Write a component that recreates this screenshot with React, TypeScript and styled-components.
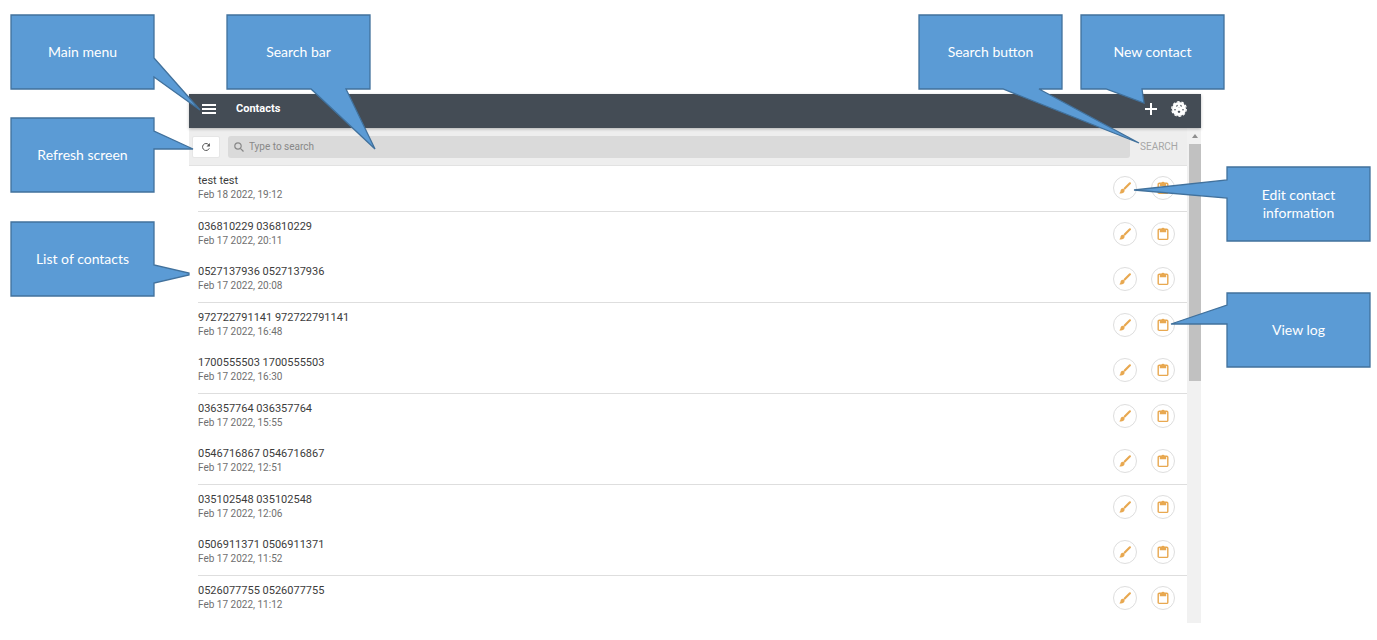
import React from "react";
import styled, { createGlobalStyle } from "styled-components";

const GlobalStyle = createGlobalStyle`
  * { box-sizing: border-box; }
  body { margin: 0; background: #fff; font-family: Roboto, "Liberation Sans", sans-serif; }
`;

const Page = styled.main`
  position: relative;
  min-height: 100vh;
  padding: 94px 176px 17px 189px;
  overflow: hidden;
`;

const AppWindow = styled.section`
  display: flex;
  flex-direction: column;
`;

const Header = styled.header`
  position: relative;
  display: flex;
  align-items: center;
  height: 34px;
  padding: 0 14px 4px 13px;
  background: #444c55;
  color: #fff;
  box-shadow: 0 1px 3px rgba(0, 0, 0, 0.25);
`;

const HeaderButton = styled.button`
  display: flex;
  padding: 0;
  border: 0;
  background: none;
  color: inherit;
  svg { display: block; }
`;

const Title = styled.h1`
  flex: 1;
  margin: 0 0 0 20px;
  font-size: 11px;
  line-height: 14px;
  font-weight: 700;
`;

const HeaderActions = styled.div`
  display: flex;
  align-items: center;
  gap: 13px;
`;

const Body = styled.div`
  display: flex;
`;

const Content = styled.div`
  flex: 1;
  min-width: 0;
  padding-bottom: 2px;
`;

const Toolbar = styled.form`
  display: flex;
  align-items: center;
  height: 38px;
  padding: 1px 9px 0 3px;
  background: #eee;
  border-bottom: 1px solid #e2e2e2;
`;

const RefreshButton = styled.button`
  display: flex;
  align-items: center;
  justify-content: center;
  width: 28px;
  height: 22px;
  padding: 0;
  border: 1px solid #e6e6e6;
  border-radius: 2px;
  background: #fff;
  color: #555;
`;

const SearchField = styled.label`
  display: flex;
  flex: 1;
  align-items: center;
  gap: 5px;
  height: 22px;
  margin: 0 10px 0 8px;
  padding: 0 6px;
  border-radius: 3px;
  background: #dadada;
  color: #888;
`;

const SearchInput = styled.input`
  flex: 1;
  min-width: 0;
  padding: 0;
  border: 0;
  outline: 0;
  background: none;
  color: #444;
  font: 10px/14px Roboto, "Liberation Sans", sans-serif;
  &::placeholder { color: #888; opacity: 1; }
`;

const SearchButton = styled.button`
  padding: 0;
  border: 0;
  background: none;
  color: #a6a6a6;
  font: 10px/14px Roboto, "Liberation Sans", sans-serif;
`;

const List = styled.ul`
  margin: 0;
  padding: 0 0 0 9px;
  list-style: none;
`;

const Row = styled.li<{ $divided: boolean }>`
  display: flex;
  align-items: flex-start;
  padding: 8px 12px 0 0;
  height: ${(p) => (p.$divided ? 46 : 45)}px;
  border-bottom: ${(p) => (p.$divided ? "1px solid #dedede" : "0")};
`;

const Details = styled.div`
  flex: 1;
  line-height: 14px;
`;

const Name = styled.div`
  color: #3c3c3c;
  font-size: 11px;
`;

const Time = styled.div`
  color: #707070;
  font-size: 10px;
`;

const RowActions = styled.div`
  display: flex;
  gap: 14px;
  padding-top: 2px;
`;

const RoundButton = styled.button`
  display: flex;
  align-items: center;
  justify-content: center;
  width: 24px;
  height: 24px;
  padding: 0;
  border: 1px solid #dedede;
  border-radius: 50%;
  background: #fff;
  color: #e8a850;
`;

const Scrollbar = styled.div`
  width: 14px;
  padding: 6px 0 0 2px;
  background: #f1f1f1;
`;

const ScrollArrow = styled.div`
  width: 0;
  height: 4px;
  margin: 0 3px 6px;
  border: 3px solid transparent;
  border-top: 0;
  border-bottom: 4px solid #8f8f8f;
`;

const ScrollThumb = styled.div`
  height: 237px;
  background: #c1c1c1;
`;

const Note = styled.div<{ $top: number; $left?: number; $right?: number }>`
  position: absolute;
  top: ${(p) => p.$top}px;
  left: ${(p) => (p.$left === undefined ? "auto" : `${p.$left}px`)};
  right: ${(p) => (p.$right === undefined ? "auto" : `${p.$right}px`)};
  display: flex;
  align-items: center;
  justify-content: center;
  width: 143px;
  height: 74px;
  padding: 0 24px;
  color: #fff;
  font: 14px/18px Lato, "Liberation Sans", sans-serif;
  text-align: center;
`;

const NoteShape = styled.svg`
  position: absolute;
  inset: 0;
  width: 100%;
  height: 100%;
  overflow: visible;
  fill: #5b9bd5;
  stroke: #41719c;
  stroke-width: 1.3;
`;

const NoteText = styled.span`
  position: relative;
`;

const BrushIcon = () => (
  <svg width="14" height="14" viewBox="0 0 14 14" aria-hidden="true">
    <path d="M11.900 2.300 6.700 7.500" stroke="currentColor" strokeWidth="2.200" strokeLinecap="round" />
    <path
      fill="currentColor"
      d="M4.600 7.700C5.900 7.700 6.700 8.600 6.600 9.700 6.400 11.900 4 12.900 1.200 12.200 2.200 11.700 2.400 11 2.500 10 2.600 8.700 3.400 7.700 4.600 7.700Z"
    />
  </svg>
);

const ClipboardIcon = () => (
  <svg width="12" height="14" viewBox="0 0 12 14" aria-hidden="true">
    <rect x="1.200" y="2.200" width="9.600" height="10.200" rx="1" fill="none" stroke="currentColor" strokeWidth="1.400" />
    <path fill="currentColor" d="M2.800 2H4.500A1.500 1.200 0 0 1 7.500 2H9.200V5.200H2.800Z" />
  </svg>
);

const BallIcon = () => (
  <svg width="16" height="16" viewBox="0 0 16 16" aria-hidden="true">
    <circle cx="8" cy="8" r="7" fill="#fff" />
    <circle cx="8" cy="8" r="7.300" fill="none" stroke="#fff" strokeWidth="1.200" strokeDasharray="2.700 1.886" />
    <g fill="#444c55">
      <path d="M8 9.400 9.400 10.400 8.900 11.800H7.100L6.600 10.400Z" />
      <path d="M6.100 3.700 6.900 4.300 6 5.700 4.900 5.300Z" />
      <path d="M9.900 3.700 9.100 4.300 10 5.700 11.100 5.300Z" />
      <circle cx="4" cy="8.700" r="0.800" />
      <circle cx="12" cy="8.700" r="0.800" />
      <circle cx="8" cy="6.600" r="0.400" />
    </g>
  </svg>
);

const contacts = [
  ["test test", "Feb 18 2022, 19:12"],
  ["036810229 036810229", "Feb 17 2022, 20:11"],
  ["0527137936 0527137936", "Feb 17 2022, 20:08"],
  ["972722791141 972722791141", "Feb 17 2022, 16:48"],
  ["1700555503 1700555503", "Feb 17 2022, 16:30"],
  ["036357764 036357764", "Feb 17 2022, 15:55"],
  ["0546716867 0546716867", "Feb 17 2022, 12:51"],
  ["035102548 035102548", "Feb 17 2022, 12:06"],
  ["0506911371 0506911371", "Feb 17 2022, 11:52"],
  ["0526077755 0526077755", "Feb 17 2022, 11:12"],
];

type Callout = { text: string; top: number; left?: number; right?: number; points: string };

const callouts: Callout[] = [
  { text: "Main menu", top: 15, left: 11, points: "0,0 143,0 143,43 189,95 143,62 143,74 0,74" },
  { text: "Search bar", top: 15, left: 227, points: "0,0 143,0 143,74 119,74 148,134 84,74 0,74" },
  { text: "Search button", top: 15, right: 315, points: "0,0 143,0 143,74 120,74 220,128 84,74 0,74" },
  { text: "New contact", top: 15, right: 153, points: "0,0 143,0 143,74 61,74 63,88 25,74 0,74" },
  { text: "Refresh screen", top: 118, left: 11, points: "0,0 143,0 143,13 182,31 143,31 143,74 0,74" },
  { text: "List of contacts", top: 222, left: 11, points: "0,0 143,0 143,43 178,51 178,53 143,61 143,74 0,74" },
  { text: "Edit contact information", top: 167, right: 7, points: "0,0 143,0 143,74 0,74 0,31 -93,23 0,13 0,0" },
  { text: "View log", top: 293, right: 7, points: "0,0 143,0 143,74 0,74 0,31 -56,31 0,12 0,0" },
];

export default function App() {
  return (
    <>
      <GlobalStyle />
      <Page>
        <AppWindow>
          <Header>
            <HeaderButton aria-label="Main menu">
              <svg width="14" height="10" viewBox="0 0 14 10" stroke="currentColor" strokeWidth="2" aria-hidden="true">
                <path d="M0 1h14M0 5h14M0 9h14" />
              </svg>
            </HeaderButton>
            <Title>Contacts</Title>
            <HeaderActions>
              <HeaderButton aria-label="New contact">
                <svg width="14" height="14" viewBox="0 0 14 14" stroke="currentColor" strokeWidth="2" aria-hidden="true">
                  <path d="M1 7h12M7 1v12" />
                </svg>
              </HeaderButton>
              <HeaderButton aria-label="Options">
                <BallIcon />
              </HeaderButton>
            </HeaderActions>
          </Header>
          <Body>
            <Content>
              <Toolbar onSubmit={(e) => e.preventDefault()}>
                <RefreshButton type="button" aria-label="Refresh screen">
                  <svg width="10" height="10" viewBox="0 0 10 10" fill="none" stroke="currentColor" strokeWidth="1" aria-hidden="true">
                    <path d="M8.300 6.300A3.500 3.500 0 1 1 7.600 2.600L8.500 3.500" />
                    <path d="M8.900 1V4.400H5.500Z" fill="currentColor" stroke="none" />
                  </svg>
                </RefreshButton>
                <SearchField>
                  <svg width="10" height="10" viewBox="0 0 10 10" fill="none" stroke="currentColor" strokeWidth="1.200" aria-hidden="true">
                    <circle cx="4" cy="4" r="3.200" />
                    <path d="M6.300 6.300 9.500 9.500" />
                  </svg>
                  <SearchInput type="text" placeholder="Type to search" aria-label="Search contacts" />
                </SearchField>
                <SearchButton type="submit">SEARCH</SearchButton>
              </Toolbar>
              <List>
                {contacts.map(([name, time], i) => (
                  <Row key={name} $divided={i % 2 === 0}>
                    <Details>
                      <Name>{name}</Name>
                      <Time>{time}</Time>
                    </Details>
                    <RowActions>
                      <RoundButton aria-label={`Edit ${name}`}>
                        <BrushIcon />
                      </RoundButton>
                      <RoundButton aria-label={`View log of ${name}`}>
                        <ClipboardIcon />
                      </RoundButton>
                    </RowActions>
                  </Row>
                ))}
              </List>
            </Content>
            <Scrollbar aria-hidden="true">
              <ScrollArrow />
              <ScrollThumb />
            </Scrollbar>
          </Body>
        </AppWindow>
        {callouts.map(({ text, top, left, right, points }) => (
          <Note key={text} $top={top} $left={left} $right={right}>
            <NoteShape viewBox="0 0 143 74" aria-hidden="true">
              <polygon points={points} />
            </NoteShape>
            <NoteText>{text}</NoteText>
          </Note>
        ))}
      </Page>
    </>
  );
}
